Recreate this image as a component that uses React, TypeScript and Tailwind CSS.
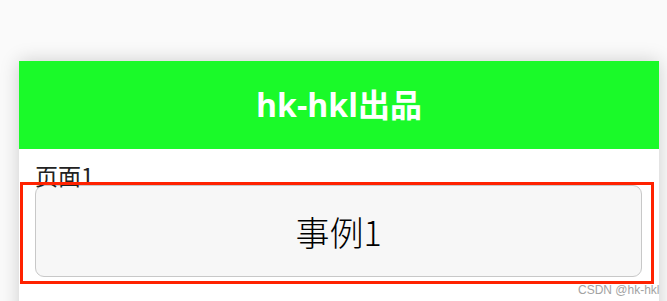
export default function App() {
  return (
    <div className="relative h-[301px] w-[667px] overflow-hidden bg-[#fafafa] pl-[19px] pr-[8px] pt-[61px] font-['Noto_Sans_CJK_SC',sans-serif]">
      <div className="h-[260px] bg-white shadow-[0_0_18px_rgba(0,0,0,0.18)]">
        {/* 标题栏 */}
        <div className="flex h-[88px] items-center justify-center bg-[#1afa29]">
          <h1 className="font-['Open_Sans','Noto_Sans_CJK_SC',sans-serif] text-[32px] font-bold leading-none text-white">
            hk-hkl出品
          </h1>
        </div>
        <div className="pl-[16px] pr-[17px] pt-[15px]">
          <p className="mb-[-1px] text-[23px] leading-[22px] text-[#222]">页面1</p>
          <button className="flex h-[92px] w-full items-center justify-center rounded-[9px] border border-[#c8c8c8] bg-[#f7f7f7] text-[34px] font-light text-black">
            事例1
          </button>
        </div>
      </div>
      {/* 标注框 */}
      <div className="absolute left-[20px] top-[182px] h-[102px] w-[634px] border-[3px] border-[#ff2200]" />
      <span className="absolute left-[578px] top-[281px] font-['Liberation_Sans',sans-serif] text-[12px] text-[#a3a3a3]">
        CSDN @hk-hkl
      </span>
    </div>
  )
}
